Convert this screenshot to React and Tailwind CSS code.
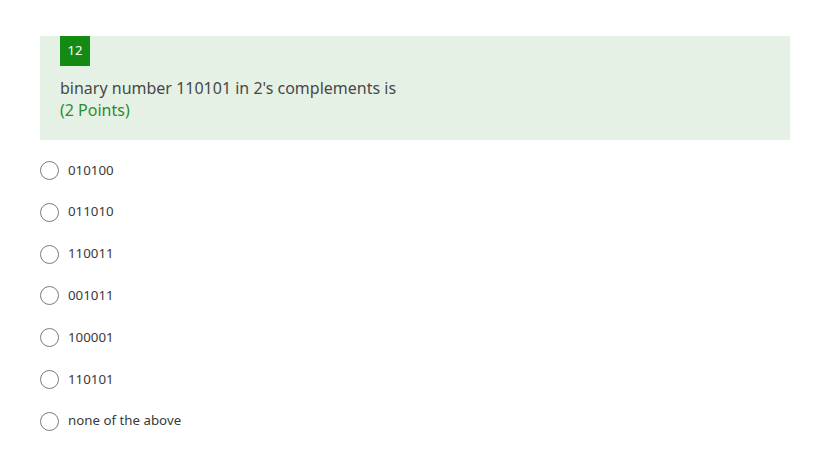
const options = [
  "010100",
  "011010",
  "110011",
  "001011",
  "100001",
  "110101",
  "none of the above",
];

export default function App() {
  return (
    <div
      className="w-[818px] h-[457px] bg-white"
      style={{ fontFamily: '"Noto Sans", "Open Sans", sans-serif' }}
    >
      <div className="pt-[36px] pl-[40px]">
        {/* QUESTION */}
        <div className="w-[750px] h-[104px] bg-[#e6f1e6] px-[20px]">
          <div className="w-[30px] h-[30px] bg-[#138b13] text-white text-[13px] flex items-center justify-center">
            12
          </div>
          <div className="mt-[11px] text-[16px] leading-[22px] text-[#484848]">
            binary number 110101 in 2's complements is
          </div>
          <div className="text-[16px] leading-[22px] text-[#2e8b2e]">(2 Points)</div>
        </div>

        {/* OPTIONS */}
        <div className="mt-[21px] flex flex-col gap-[22.8px]">
          {options.map((o) => (
            <label key={o} className="flex items-center h-[19px]">
              <span className="w-[19px] h-[19px] rounded-full border border-[#7a7a7a] bg-white" />
              <span className="ml-[9px] text-[13.3px] text-[#3a3a3a]">{o}</span>
            </label>
          ))}
        </div>
      </div>
    </div>
  );
}
